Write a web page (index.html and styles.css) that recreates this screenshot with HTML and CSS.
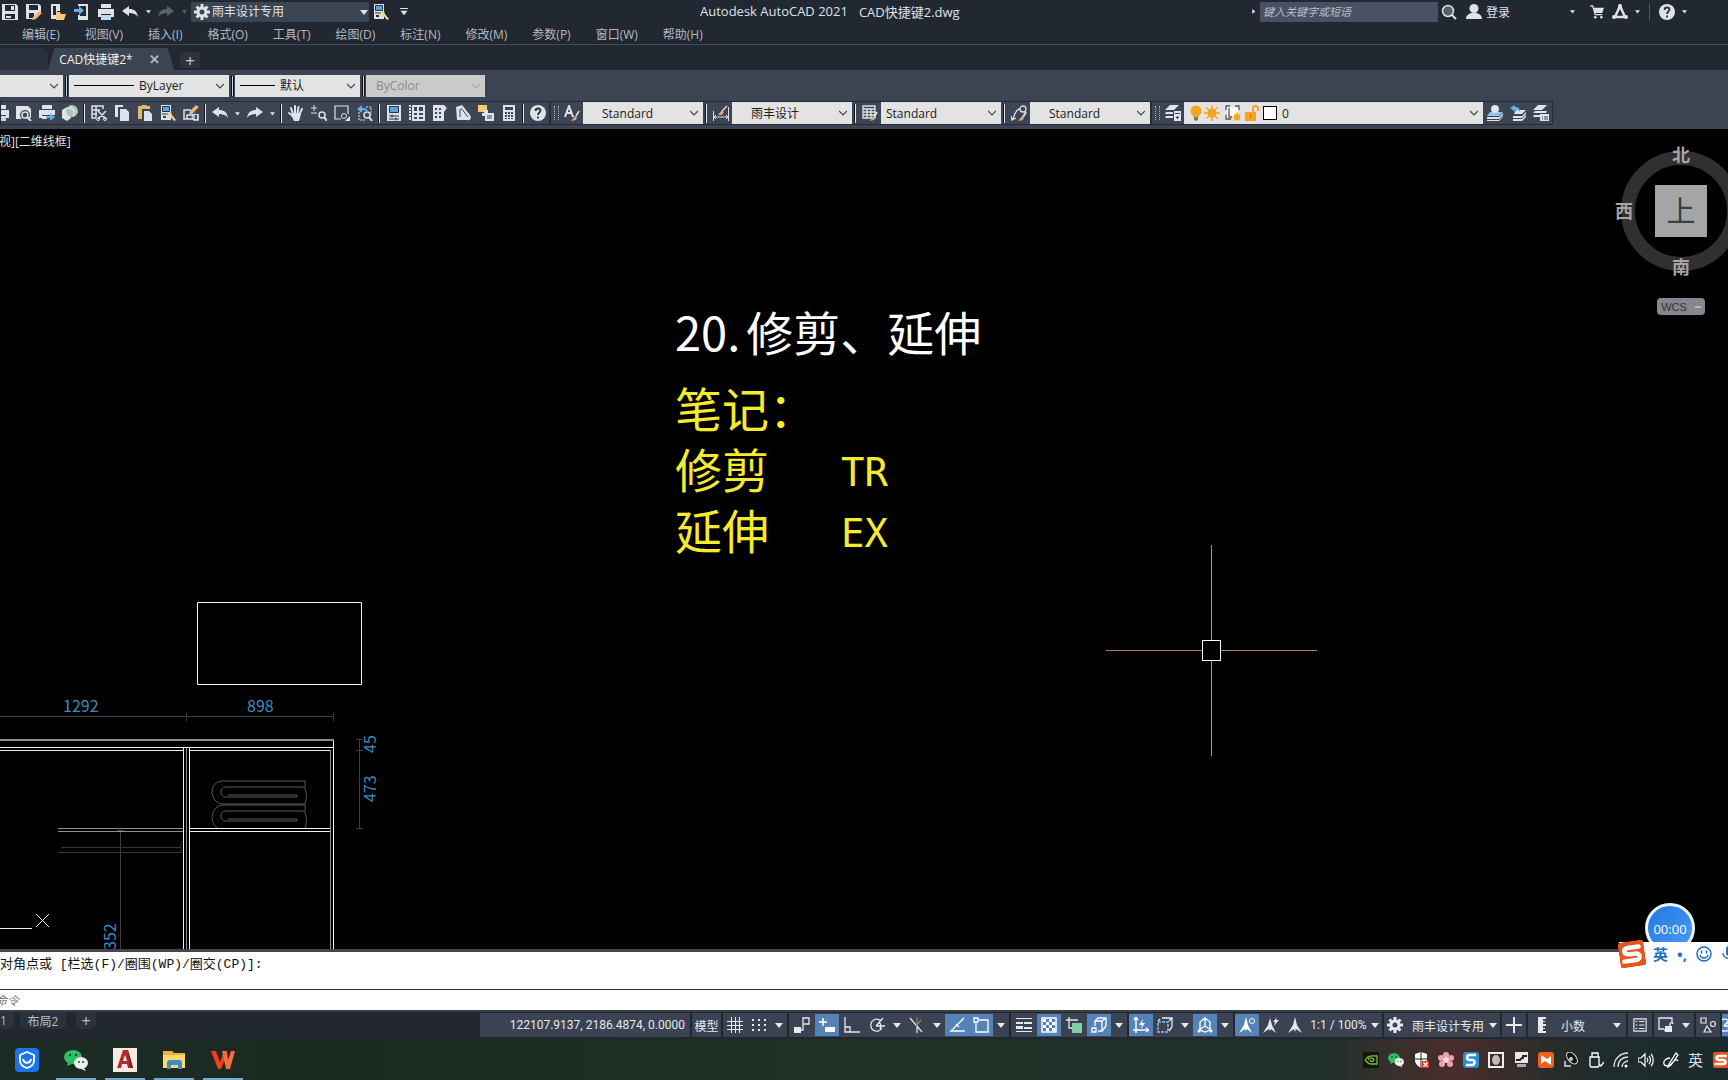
FILE: index.html
```html
<!DOCTYPE html>
<html lang="zh-CN">
<head>
  <meta charset="UTF-8">
  <title>Autodesk AutoCAD 2021 - CAD快捷键2.dwg</title>
  <link rel="stylesheet" href="styles.css">
</head>
<body>

<!-- Icon sprite -->
<svg class="sprite">
  <symbol id="save" viewBox="0 0 16 16"><path fill="currentColor" fill-rule="evenodd" d="M0 0h14l2 2v14H0zM3 1v6h10V1zM3 10v5h10v-5zM9 2h3v4H9zM4 12h5v2H4z"/></symbol>
  <symbol id="saveas" viewBox="0 0 16 16"><path fill="currentColor" fill-rule="evenodd" d="M0 0h13l2 2v6l-7 7H0zM3 1v5h9V1zM3 9v5h5V9z"/><path fill="#f0b27a" d="M7 13l6-6 3 2-6 6-4 1z"/></symbol>
  <symbol id="opendev" viewBox="0 0 16 16"><path fill="currentColor" fill-rule="evenodd" d="M1 0h9v7H7v8H1zM3 2v9h3V2z"/><path fill="#f3ca78" d="M6 8h4l1 2h5l-2 6H6z"/></symbol>
  <symbol id="savedev" viewBox="0 0 16 16"><path fill="currentColor" d="M4 0h10v16H4v-5h2v1h6V2H4z"/><path fill="#61b1ea" d="M0 5h5V2l5 4.500-5 4.500V8H0z"/></symbol>
  <symbol id="print" viewBox="0 0 16 16"><path fill="currentColor" d="M3 0h10v4H3zM0 5h16v8h-3v-3H3v3H0z"/><path fill="#b9dcf5" d="M3 11h10v5H3z"/></symbol>
  <symbol id="undo" viewBox="0 0 16 16"><path fill="currentColor" d="M0 7l7-5v3c5 0 8 2 9 8-2-3-5-4-9-4v3z"/></symbol>
  <symbol id="redo" viewBox="0 0 16 16"><path fill="currentColor" d="M16 7L9 2v3C4 5 1 7 0 13c2-3 5-4 9-4v3z"/></symbol>
  <symbol id="gear" viewBox="0 0 16 16"><path fill="none" stroke="currentColor" stroke-width="3" d="M8 0v4M8 12v4M0 8h4M12 8h4M2.500 2.500l3 3M10.500 10.500l3 3M13.500 2.500l-3 3M5.500 10.500l-3 3"/><circle cx="8" cy="8" r="4" fill="none" stroke="currentColor" stroke-width="3"/></symbol>
  <symbol id="match" viewBox="0 0 16 16"><path fill="currentColor" fill-rule="evenodd" d="M1 0h10v15H1zM3 11h3v2H3z"/><path fill="#5ba3df" stroke="#243347" d="M2.500 1.500h7v5h-7z"/><path stroke="#243347" d="M2 9h7"/><path fill="#f3d3a0" d="M8 8l3-1 1 3 4 5-2 1-4-5-3 1z"/></symbol>
  <symbol id="preview" viewBox="0 0 16 16"><path fill="currentColor" d="M0 1h12l3 3v9h-2a5 5 0 10-7 1H0z"/><circle cx="9" cy="10" r="3" fill="none" stroke="currentColor" stroke-width="1.500"/><path stroke="currentColor" stroke-width="2" d="M11 12l4 4"/></symbol>
  <symbol id="publish" viewBox="0 0 16 16"><path fill="currentColor" d="M3 0h10v4H3zM0 5h16v5H3v3H0zM3 11h5v3H3z"/><path fill="#61b1ea" d="M7 11h4V8l5 4-5 4v-3H7z"/></symbol>
  <symbol id="globe" viewBox="0 0 16 16"><path fill="currentColor" d="M0 5l5-3 4 3v8l-4 3-5-3z"/><circle cx="10" cy="6" r="6" fill="#a7c9b6"/><path fill="none" stroke="#e3efe8" d="M5 4c4-2 8 1 10 4M8 1c4 3 5 7 3 11"/></symbol>
  <symbol id="cut" viewBox="0 0 16 16"><path fill="none" stroke="currentColor" stroke-width="1.500" d="M12 4V1H1v12h4M1 5h8M1 9h5M5 1v11M7 6l8 8M15 6l-8 8"/><circle cx="7" cy="14" r="1.500" fill="none" stroke="currentColor"/><circle cx="14" cy="14" r="1.500" fill="none" stroke="currentColor"/></symbol>
  <symbol id="copy" viewBox="0 0 16 16"><path fill="currentColor" d="M1 0h8v2H4v10H1zM6 4h6l3 3v9H6z"/></symbol>
  <symbol id="paste" viewBox="0 0 16 16"><path fill="#e5b56c" d="M1 1h3l1-1h4l1 1h3v3H5v10H1z"/><path fill="currentColor" d="M7 6h5l3 3v7H7z"/></symbol>
  <symbol id="blockedit" viewBox="0 0 16 16"><path fill="none" stroke="currentColor" stroke-width="1.500" d="M8 5H1v9h9M4 14v-4h7v5h4v-6"/><circle cx="12" cy="12" r="3" fill="none" stroke="currentColor"/><path fill="#f0b27a" d="M6 9l1-3 6-6 3 2-7 7z"/></symbol>
  <symbol id="hand" viewBox="0 0 16 16"><path fill="none" stroke="currentColor" stroke-width="2" stroke-linecap="round" d="M5 9L3 3M7 8V1M9.500 8l1-6M11 10l3-6M5 11L1 8"/><path fill="currentColor" d="M4 8h8l1 1-2 7H6l-3-6z"/></symbol>
  <symbol id="zoom" viewBox="0 0 16 16"><path fill="none" stroke="currentColor" d="M3 0v6M0 3h6M0 8h6"/><circle cx="11" cy="10" r="3" fill="none" stroke="currentColor" stroke-width="1.500"/><path stroke="currentColor" stroke-width="2" d="M13 12l3 4"/></symbol>
  <symbol id="zoomwin" viewBox="0 0 16 16"><path fill="none" stroke="currentColor" stroke-width="1.200" d="M7 14H1V1h13v8"/><circle cx="10" cy="11" r="2.500" fill="none" stroke="currentColor"/><path fill="currentColor" d="M16 11v5h-5z"/></symbol>
  <symbol id="zoomprev" viewBox="0 0 16 16"><path fill="none" stroke="currentColor" stroke-dasharray="2 1" d="M2 7v8h6M9 2h5v8"/><circle cx="10" cy="10" r="3" fill="none" stroke="currentColor" stroke-width="1.500"/><path stroke="currentColor" stroke-width="2" d="M12 12l3 4"/><path fill="#61b1ea" d="M0 4l5-4v3c4 0 6 1 6 5-2-2-3-3-6-3v3z"/></symbol>
  <symbol id="props" viewBox="0 0 16 16"><path fill="currentColor" d="M1 0h14v16H1z"/><path fill="#5ba3df" stroke="#243347" d="M3.500 1.500h9v6h-9z"/><path stroke="#243347" d="M3 11h10M3 14h10M6 9.500v3M10 12.500v3"/></symbol>
  <symbol id="center" viewBox="0 0 16 16"><path fill="currentColor" fill-rule="evenodd" d="M0 0h2v2H0zM0 3h2v2H0zM0 6h2v2H0zM0 9h2v2H0zM0 12h2v3H0zM3 0h13v16H3zM5 2v4h3V2zM10 2v4h4V2zM5 8v2h3V8zM10 8v2h4V8zM5 12v2h3v-2zM10 12v2h4v-2z"/></symbol>
  <symbol id="palette" viewBox="0 0 16 16"><path fill="currentColor" fill-rule="evenodd" d="M1 0h11l3 3-3 4v9H1zM3 3v2h2V3zM7 3v2h2V3zM3 7v2h2V7zM7 7v2h2V7zM3 11v2h2v-2zM7 11v2h2v-2z"/></symbol>
  <symbol id="sheet" viewBox="0 0 16 16"><path fill="currentColor" d="M1 2l6-2 8 10c2 3 0 6-3 5H2z"/><path fill="none" stroke="#3d4454" d="M6 3l7 9M5 4v8"/></symbol>
  <symbol id="markup" viewBox="0 0 16 16"><path fill="#f3ca78" d="M0 0h9v7H0z"/><path fill="currentColor" d="M6 5h4v3h6v8H7v-5H4V8h2z"/><path stroke="#3d4454" d="M9 11h5M9 13h5"/></symbol>
  <symbol id="calc" viewBox="0 0 16 16"><path fill="currentColor" fill-rule="evenodd" d="M2 0h12v16H2zM4 2v3h8V2zM4 7v2h2V7zM7 7v2h2V7zM10 7v2h2V7zM4 10v2h2v-2zM7 10v2h2v-2zM10 10v2h2v-2zM4 13v1h2v-1zM7 13v1h2v-1zM10 13v1h2v-1z"/></symbol>
  <symbol id="help" viewBox="0 0 16 16"><circle cx="8" cy="8" r="8" fill="currentColor"/><path fill="none" stroke="#2c3442" stroke-width="1.800" d="M5.500 6c0-3.500 5-3 5-.5C10.500 7.500 8 7.500 8 10M8 11.500v2"/></symbol>
  <symbol id="textstyle" viewBox="0 0 16 16"><path fill="none" stroke="currentColor" stroke-width="2" d="M1 12L5 1l4 11M3 8h5"/><path stroke="currentColor" stroke-width="1.500" d="M15 6l-3 5"/><path fill="#d9a982" d="M11 11l2 1-1 3-5 1z"/></symbol>
  <symbol id="dimstyle" viewBox="0 0 16 16"><path fill="none" stroke="currentColor" d="M.5 6v10M15.500 2v14M1 12h14M3 10l-2 2 2 2M13 10l2 2-2 2"/><path stroke="currentColor" stroke-width="1.500" d="M14 1L9 6"/><path fill="#d9a982" d="M9 5l2 2-2 3H5z"/></symbol>
  <symbol id="tabstyle" viewBox="0 0 16 16"><path fill="none" stroke="currentColor" stroke-width="1.300" d="M1 1h12v12H1zM1 4h12M1 7h12M1 10h12M5 4v9M9 4v9"/><path stroke="currentColor" stroke-width="2" d="M15 7l-3 5"/><path fill="#d9a982" d="M11 11l2 1-1 3-4 1z"/></symbol>
  <symbol id="mlstyle" viewBox="0 0 16 16"><circle cx="12" cy="4" r="3" fill="none" stroke="currentColor" stroke-width="1.300"/><path fill="none" stroke="currentColor" stroke-width="1.300" d="M9 4C6 4 4 7 2 14M0 11l1 4 4-2"/><path stroke="currentColor" stroke-width="2" d="M15 7l-3 5"/><path fill="#d9a982" d="M11 11l2 1-1 3-5 1z"/></symbol>
  <symbol id="layerprop" viewBox="0 0 16 16"><path fill="currentColor" d="M5 0h9l-5 5H0zM1 7h7v2H0zM1 11h7v2H0zM9 6h7v10H9z"/><path stroke="#3d4454" d="M10 8.500h5M11 12.500h3M12.500 11v3"/></symbol>
  <symbol id="bulb" viewBox="0 0 16 16"><circle cx="8" cy="6" r="5.500" fill="#f5a41c"/><path fill="#f5a41c" d="M5 9h6v3H5z"/><path fill="#777" d="M6 12h4v3l-2 1-2-1z"/></symbol>
  <symbol id="sun" viewBox="0 0 16 16"><circle cx="8" cy="8" r="4.500" fill="#f5a41c"/><path stroke="#f5a41c" stroke-width="1.500" d="M8 0v16M0 8h16M2.500 2.500l11 11M13.500 2.500l-11 11"/></symbol>
  <symbol id="vpfreeze" viewBox="0 0 16 16"><path fill="#fff" d="M2 2h11v11H2z"/><path fill="none" stroke="#555" stroke-width="1.300" d="M1 5V1h4M10 1h4v4M1 10v4h5M4 3v9h3"/><circle cx="12" cy="12" r="3" fill="#f5a41c"/><path stroke="#f5a41c" d="M12 7v9M7 12h9M9 9l6 6M15 9l-6 6"/></symbol>
  <symbol id="unlock" viewBox="0 0 16 16"><path fill="#f5a41c" d="M1 7h11v9H1z"/><path fill="none" stroke="#f5a41c" stroke-width="2" d="M9 8V4c0-4 5-4 5 0v2"/><path fill="#b87400" d="M6 10h1v3H6z"/></symbol>
  <symbol id="layercur" viewBox="0 0 16 16"><path fill="#8cc4ee" d="M3 7h13l-4 4H0z"/><circle cx="8" cy="4" r="4" fill="currentColor"/><path fill="currentColor" d="M0 12h12l4-4v2l-4 4H0zM0 15h12l4-4v1l-4 4H0z"/></symbol>
  <symbol id="layerback" viewBox="0 0 16 16"><path fill="currentColor" d="M6 5h10l-4 4H4zM3 11h9l4-4v2l-4 4H3zM3 14h9l4-4v2l-4 4H3z"/><path fill="#61b1ea" d="M0 3l5-3v2c3 0 5 1 5 5-2-2-3-2-5-2v2z"/></symbol>
  <symbol id="layerstate" viewBox="0 0 16 16"><path fill="currentColor" d="M5 0h9l-5 5H0zM2 6h12l-1 2H0zM1 10h6v2H0zM7 9h9v7H7z"/><path stroke="#3d4454" d="M9 12h1M11 12h4M9 14h1M11 14h4"/></symbol>
  <symbol id="search" viewBox="0 0 16 16"><circle cx="7" cy="7" r="5.500" fill="#59606c" stroke="currentColor" stroke-width="1.500"/><path stroke="currentColor" stroke-width="2" d="M11 11l4 4"/></symbol>
  <symbol id="user" viewBox="0 0 16 16"><circle cx="8" cy="4.500" r="4.500" fill="currentColor"/><path fill="currentColor" d="M0 15c0-4 3-5 5-6h6c2 1 5 2 5 6z"/></symbol>
  <symbol id="cart" viewBox="0 0 16 16"><path fill="none" stroke="currentColor" stroke-width="1.500" d="M0 1h3l3 10h8"/><path fill="currentColor" d="M4 3h12l-2 6H6z"/><circle cx="6" cy="14" r="1.500" fill="currentColor"/><circle cx="13" cy="14" r="1.500" fill="currentColor"/></symbol>
  <symbol id="adsk" viewBox="0 0 16 16"><path fill="none" stroke="currentColor" stroke-width="2.500" d="M8 2L3 13h10z"/><circle cx="8" cy="2" r="2" fill="currentColor"/><circle cx="2" cy="13" r="2" fill="currentColor"/><circle cx="14" cy="13" r="2" fill="currentColor"/></symbol>
  <symbol id="caret" viewBox="0 0 8 8"><path fill="currentColor" d="M0 2h8L4 7z"/></symbol>
  <symbol id="chev" viewBox="0 0 8 8"><path fill="none" stroke="currentColor" stroke-width="1.200" d="M0 2l4 4 4-4"/></symbol>

  <!-- Status bar -->
  <symbol id="grid" viewBox="0 0 16 16"><path stroke="currentColor" d="M4.500 0v16M8.500 0v16M12.500 0v16M0 4.500h16M0 8.500h16M0 12.500h16"/></symbol>
  <symbol id="snap" viewBox="0 0 16 16"><path stroke="currentColor" stroke-width="2" stroke-dasharray="2 4" d="M1 3h14M1 8h14M1 13h14"/></symbol>
  <symbol id="infer" viewBox="0 0 16 16"><path fill="currentColor" d="M0 10h7v6H0z"/><path fill="none" stroke="currentColor" stroke-width="1.300" d="M7 13h2V1h6v6H9"/></symbol>
  <symbol id="dyn" viewBox="0 0 16 16"><path stroke="currentColor" stroke-width="1.500" d="M4 1v8M0 5h8"/><path fill="currentColor" d="M6 10h10v5H6z"/></symbol>
  <symbol id="ortho" viewBox="0 0 16 16"><path fill="none" stroke="currentColor" stroke-width="1.300" d="M1 0v15h15M1 10h5v5"/></symbol>
  <symbol id="polar" viewBox="0 0 16 16"><path fill="none" stroke="currentColor" stroke-width="1.300" d="M12 4a6 6 0 101 7M7 9h9M7 9l7-8M10 5c2 2 2 5 1 7"/></symbol>
  <symbol id="iso" viewBox="0 0 16 16"><path stroke="currentColor" stroke-width="1.200" d="M1 1l6 7 6 7M8 8v8"/><path stroke="#8d875f" stroke-width="1.200" d="M8 0v8M12 3l-5 6"/></symbol>
  <symbol id="track" viewBox="0 0 16 16"><path fill="none" stroke="currentColor" stroke-width="1.300" d="M15 1L2 14h14M7 7l3 3"/></symbol>
  <symbol id="osnap" viewBox="0 0 16 16"><path fill="none" stroke="currentColor" stroke-width="1.300" d="M1 1h4v4H1zM6 3h9v12H3V6"/></symbol>
  <symbol id="lweight" viewBox="0 0 16 16"><path fill="currentColor" d="M0 1h16v1H0zM0 5h7v2H0zM8 5h8v2H8zM0 9h7v3H0zM8 10h8v2H8zM0 14h16v1H0z"/></symbol>
  <symbol id="transp" viewBox="0 0 16 16"><path fill="none" stroke="currentColor" stroke-width="1.500" d="M1 1h14v14H1z"/><path stroke="currentColor" stroke-width="3" stroke-dasharray="3 3" d="M2 3.500h12M5 6.500h9M2 9.500h12M5 12.500h9"/></symbol>
  <symbol id="cycle" viewBox="0 0 16 16"><path fill="none" stroke="currentColor" stroke-width="1.300" d="M3 0v11h3M0 3h12"/><path fill="#7fd0a2" d="M6 6h10v10H6z"/></symbol>
  <symbol id="osnap3d" viewBox="0 0 16 16"><path fill="none" stroke="currentColor" stroke-width="1.300" d="M4 9V4l3-3h8v8l-4 5H7M4 4h7v9M11 4l4-3M1 11h4v4H1z"/></symbol>
  <symbol id="ucs" viewBox="0 0 16 16"><path fill="none" stroke="currentColor" stroke-width="1.400" d="M3 16V1M1 3l2-3 2 3M0 13h15M13 11l3 2-3 2"/><path fill="currentColor" d="M10 2L6 8h3l-1 4 4-6H9z"/></symbol>
  <symbol id="filter" viewBox="0 0 16 16"><path fill="none" stroke="currentColor" stroke-width="1.300" d="M5 1h10v9M3 2L1 4M15 1l-3 3M15 10l-3 4"/><path fill="none" stroke="#8cc4ee" stroke-width="1.500" stroke-dasharray="3 1" d="M1 5h10v10H1z"/></symbol>
  <symbol id="gizmo" viewBox="0 0 16 16"><path fill="none" stroke="currentColor" stroke-width="1.300" d="M8 1v8M8 9l-6 4M8 9l6 4M8 1L3 5v8l5 2 5-2V5z"/><circle cx="8" cy="2" r="1.500" fill="currentColor"/><circle cx="2" cy="14" r="1.500" fill="currentColor"/><circle cx="14" cy="14" r="1.500" fill="currentColor"/></symbol>
  <symbol id="annot" viewBox="0 0 16 16"><path fill="currentColor" d="M7 0l2 8 4 8-5-4-1 2-1-2-6 4 5-8z"/><circle cx="13" cy="4" r="2.500" fill="none" stroke="currentColor"/></symbol>
  <symbol id="annot2" viewBox="0 0 16 16"><path fill="currentColor" d="M7 1l2 7 4 8-5-4-1 2-1-2-6 4 5-8zM14 0l-4 5h2l-1 4 5-6h-3z"/></symbol>
  <symbol id="annot3" viewBox="0 0 16 16"><path fill="currentColor" d="M8 0l2 8 5 8-6-4-1 3-1-3-6 4 5-8z"/></symbol>
  <symbol id="plus" viewBox="0 0 16 16"><path stroke="currentColor" stroke-width="2" d="M8 0v16M0 8h16"/></symbol>
  <symbol id="ruler" viewBox="0 0 16 16"><path fill="currentColor" d="M5 0h8v2h-3v2h2v1h-2v2h3v2h-3v2h2v1h-2v2h3v2H5z"/></symbol>
  <symbol id="quick" viewBox="0 0 16 16"><path fill="none" stroke="currentColor" stroke-width="1.300" d="M1 1h14v14H1zM3 4h2M7 4h6M3 8h2M7 8h6M3 12h2M7 12h6"/></symbol>
  <symbol id="lockui" viewBox="0 0 16 16"><path fill="none" stroke="currentColor" stroke-width="1.300" d="M6 12H1V1h13v4M6 12l2 3M12 9V7c0-2 3-2 3 0"/><path fill="currentColor" d="M7 9h7v6H7z"/></symbol>
  <symbol id="isolate" viewBox="0 0 16 16"><path fill="none" stroke="currentColor" stroke-width="1.200" d="M1 1h5v5H1zM7 9l4 6H4z"/><circle cx="13" cy="7" r="2.500" fill="none" stroke="currentColor" stroke-width="1.200"/></symbol>

  <!-- Taskbar and tray -->
  <symbol id="guard" viewBox="0 0 24 24"><rect width="24" height="24" rx="4" fill="#1c74ea"/><path fill="none" stroke="#fff" stroke-width="1.800" d="M12 4l7 3v6c0 4-4 6-7 7-3-1-7-3-7-7V7z"/><path fill="none" stroke="#fff" stroke-width="2" d="M8 11c1 5 7 5 8 0"/></symbol>
  <symbol id="wechat" viewBox="0 0 24 24"><ellipse cx="9" cy="9" rx="9" ry="7" fill="#2dbf62"/><path fill="#2dbf62" d="M4 14l-1 4 5-2z"/><ellipse cx="17" cy="15" rx="7" ry="6" fill="#eef1ef"/><path fill="#eef1ef" d="M20 20l2 3-5-2z"/><g fill="#1b4a2d"><circle cx="6" cy="7" r="1.200"/><circle cx="12" cy="7" r="1.200"/><circle cx="15" cy="14" r="1"/><circle cx="19" cy="14" r="1"/></g></symbol>
  <symbol id="acad" viewBox="0 0 24 24"><path fill="#f7e9e6" d="M0 0h24v24H0z"/><path fill="#b32b2b" fill-rule="evenodd" d="M10 2h5l5 18h-5l-1-4H9l-1 4H4zM12 7l-2 6h4z"/><path fill="#7e1b1e" d="M15 2l5 18h-3z"/></symbol>
  <symbol id="folder" viewBox="0 0 24 24"><path fill="#e8b53c" d="M1 3h9l2 2h11v4H1z"/><path fill="#fbd970" d="M1 7h22v13H1z"/><path fill="#3f8cbf" d="M5 20v-5c0-2 1-3 3-3h9c2 0 3 1 3 3v6h-4v-4H9v4H5z"/></symbol>
  <symbol id="wps" viewBox="0 0 24 24"><path fill="#f0401f" d="M0 3h5l4 11 3-8h4l-6 15H7z"/><path fill="#ff6a3d" d="M11 3h5l1 9 3-9h4l-5 18h-4z"/></symbol>
  <symbol id="nvidia" viewBox="0 0 16 16"><path fill="#0b1a07" d="M0 0h16v16H0z"/><path fill="none" stroke="#8fb14a" stroke-width="1.300" d="M2 8c3-5 7-4 10-4h2v8H8C5 12 4 10 2 8M5 8c1-3 6-2 6 0-1 2-4 2-4 0"/></symbol>
  <symbol id="shield" viewBox="0 0 16 16"><path fill="#fff" d="M8 0l6 2v6c0 4-3 6-6 8-3-2-6-4-6-8V2z"/><path stroke="#222" d="M8 0v16M2 7h12"/><path fill="#e03a2f" d="M9 9h7v7H9z"/><path stroke="#fff" stroke-width="1.300" d="M10.500 10.500l4 4M14.500 10.500l-4 4"/></symbol>
  <symbol id="flower" viewBox="0 0 16 16"><g fill="#eda3ab"><circle cx="8" cy="3" r="3"/><circle cx="13" cy="6" r="3"/><circle cx="12" cy="12" r="3"/><circle cx="4" cy="12" r="3"/><circle cx="3" cy="6" r="3"/></g><circle cx="8" cy="8" r="3" fill="#f9d9da"/></symbol>
  <symbol id="sblue" viewBox="0 0 16 16"><rect width="16" height="16" rx="3" fill="#2a8fd0"/><path fill="none" stroke="#fff" stroke-width="2.500" d="M13 3H7c-4 0-4 5 0 5h2c4 0 3 5 0 5H3"/></symbol>
  <symbol id="disc" viewBox="0 0 16 16"><path fill="none" stroke="#eee" stroke-width="2" d="M1 1h14v14H1z"/><ellipse cx="8" cy="8" rx="4" ry="5" fill="#bbb"/></symbol>
  <symbol id="chart" viewBox="0 0 16 16"><path fill="#e8e8e8" d="M2 0h13v11H2z"/><path fill="none" stroke="#222" stroke-width="1.800" d="M3 8h4l4-4h3M10 3v4"/><path fill="#aaa" d="M4 12h9v3H4z"/></symbol>
  <symbol id="todesk" viewBox="0 0 16 16"><rect width="16" height="16" rx="3" fill="#f2601d"/><path fill="#fff" d="M3 3l6 4 4-3v9L7 9l-4 3z"/></symbol>
  <symbol id="audio" viewBox="0 0 16 16"><ellipse cx="9" cy="6" rx="7" ry="4" transform="rotate(50 9 6)" fill="#111" stroke="#ddd"/><circle cx="8" cy="7" r="2" fill="#ccc"/><path fill="none" stroke="#ddd" stroke-width="1.500" d="M2 9v5h6"/></symbol>
  <symbol id="usb" viewBox="0 0 16 16"><path fill="none" stroke="#fff" stroke-width="1.300" d="M4 5V1h6v4M2 5h9v9l-1 1H3l-1-1zM11 12l2 2 3-4"/></symbol>
  <symbol id="wifi" viewBox="0 0 16 16"><path fill="none" stroke="#ddd" stroke-width="1.300" d="M1 15C1 7 7 1 15 1M5 15c0-6 4-10 10-10M9 15c0-3 3-6 6-6"/><circle cx="13" cy="14" r="1.500" fill="#fff"/></symbol>
  <symbol id="volume" viewBox="0 0 16 16"><path fill="none" stroke="#fff" stroke-width="1.200" d="M0 6h3l4-4v12l-4-4H0zM9 6c1 1 1 3 0 4M11 4c2 2 2 6 0 8M13 2c3 3 3 9 0 12"/></symbol>
  <symbol id="pen" viewBox="0 0 16 16"><path fill="none" stroke="#fff" stroke-width="1.300" d="M6 12l7-11 2 2-7 10-3 2zM7 6C3 6 0 9 1 12s6 2 8-1 5-4 6-2"/></symbol>
  <symbol id="sogou" viewBox="0 0 24 24"><rect width="24" height="24" rx="3" fill="#e85420"/><path fill="none" stroke="#fff" stroke-width="4" stroke-linecap="round" d="M19 6H9c-5 0-5 5 0 6h6c5 0 5 6 0 6H4"/></symbol>
  <symbol id="smile" viewBox="0 0 16 16"><circle cx="8" cy="8" r="7" fill="none" stroke="currentColor" stroke-width="1.500"/><path stroke="currentColor" stroke-width="1.500" d="M5.500 4.500v3M10.500 4.500v3"/><path fill="none" stroke="currentColor" stroke-width="1.300" d="M4 9c1 4 7 4 8 0"/></symbol>
  <symbol id="mic" viewBox="0 0 16 16"><rect x="5" width="6" height="10" rx="3" fill="currentColor"/><path fill="none" stroke="currentColor" stroke-width="1.500" d="M2 7c0 7 12 7 12 0M8 12v4"/></symbol>
</svg>

<header class="titlebar">
  <div class="quick">
    <button class="tb" aria-label="保存"><svg class="ic"><use href="#save"/></svg></button>
    <button class="tb" aria-label="另存为"><svg class="ic"><use href="#saveas"/></svg></button>
    <button class="tb" aria-label="从移动端打开"><svg class="ic"><use href="#opendev"/></svg></button>
    <button class="tb" aria-label="保存到移动端"><svg class="ic"><use href="#savedev"/></svg></button>
    <button class="tb" aria-label="打印"><svg class="ic"><use href="#print"/></svg></button>
    <button class="tb" aria-label="放弃"><svg class="ic"><use href="#undo"/></svg></button>
    <button class="drop" aria-label="放弃列表"><svg class="car"><use href="#caret"/></svg></button>
    <button class="tb off" aria-label="重做"><svg class="ic"><use href="#redo"/></svg></button>
    <button class="drop off" aria-label="重做列表"><svg class="car"><use href="#caret"/></svg></button>
  </div>
  <label class="workspace">
    <svg class="ic"><use href="#gear"/></svg>
    <select aria-label="工作空间"><option>雨丰设计专用</option></select>
    <svg class="car big"><use href="#caret"/></svg>
  </label>
  <button class="tb" aria-label="特性匹配"><svg class="ic"><use href="#match"/></svg></button>
  <button class="tb custom" aria-label="自定义"><svg class="car big"><use href="#caret"/></svg></button>
  <h1 class="title"><span>Autodesk AutoCAD 2021</span><span>CAD快捷键2.dwg</span></h1>
  <div class="account">
    <button class="drop side" aria-label="展开"><svg class="car"><use href="#caret"/></svg></button>
    <input class="search" type="text" placeholder="键入关键字或短语" aria-label="搜索">
    <button class="tb" aria-label="搜索"><svg class="ic"><use href="#search"/></svg></button>
    <button class="login"><svg class="ic"><use href="#user"/></svg>登录</button>
    <button class="drop" aria-label="登录选项"><svg class="car"><use href="#caret"/></svg></button>
    <button class="tb cart" aria-label="应用商店"><svg class="ic sm"><use href="#cart"/></svg></button>
    <button class="tb" aria-label="Autodesk"><svg class="ic"><use href="#adsk"/></svg></button>
    <button class="drop" aria-label="更多"><svg class="car"><use href="#caret"/></svg></button>
    <span class="vline"></span>
    <button class="tb" aria-label="帮助"><svg class="ic"><use href="#help"/></svg></button>
    <button class="drop" aria-label="帮助列表"><svg class="car"><use href="#caret"/></svg></button>
  </div>
</header>

<nav class="menubar">
  <a href="#">编辑(E)</a>
  <a href="#">视图(V)</a>
  <a href="#">插入(I)</a>
  <a href="#">格式(O)</a>
  <a href="#">工具(T)</a>
  <a href="#">绘图(D)</a>
  <a href="#">标注(N)</a>
  <a href="#">修改(M)</a>
  <a href="#">参数(P)</a>
  <a href="#">窗口(W)</a>
  <a href="#">帮助(H)</a>
</nav>

<div class="doctabs">
  <span class="doctab prev"></span>
  <button class="doctab active">CAD快捷键2*<b>✕</b></button>
  <button class="newtab" aria-label="新建图形">+</button>
</div>

<div class="toolrow props">
  <label class="combo color"><select aria-label="颜色"><option></option></select><svg class="chev"><use href="#chev"/></svg></label>
  <span class="grip"></span>
  <label class="combo ltype"><i></i><select aria-label="线型"><option>ByLayer</option></select><svg class="chev"><use href="#chev"/></svg></label>
  <span class="grip"></span>
  <label class="combo lweight"><i></i><select aria-label="线宽"><option>默认</option></select><svg class="chev"><use href="#chev"/></svg></label>
  <span class="grip"></span>
  <label class="combo pstyle"><select aria-label="打印样式" disabled><option>ByColor</option></select><svg class="chev"><use href="#chev"/></svg></label>
</div>

<div class="toolrow std">
  <div class="panel first">
    <button class="tb" aria-label="打印"><svg class="ic"><use href="#print"/></svg></button>
    <button class="tb" aria-label="打印预览"><svg class="ic"><use href="#preview"/></svg></button>
    <button class="tb" aria-label="发布"><svg class="ic"><use href="#publish"/></svg></button>
    <button class="tb" aria-label="三维打印"><svg class="ic"><use href="#globe"/></svg></button>
    <span class="sep"></span>
    <button class="tb" aria-label="剪切"><svg class="ic"><use href="#cut"/></svg></button>
    <button class="tb" aria-label="复制"><svg class="ic"><use href="#copy"/></svg></button>
    <button class="tb" aria-label="粘贴"><svg class="ic"><use href="#paste"/></svg></button>
    <button class="tb" aria-label="特性匹配"><svg class="ic"><use href="#match"/></svg></button>
    <button class="tb" aria-label="块编辑器"><svg class="ic"><use href="#blockedit"/></svg></button>
    <span class="sep"></span>
    <button class="tb" aria-label="放弃"><svg class="ic"><use href="#undo"/></svg></button>
    <button class="drop" aria-label="放弃列表"><svg class="car"><use href="#caret"/></svg></button>
    <button class="tb" aria-label="重做"><svg class="ic"><use href="#redo"/></svg></button>
    <button class="drop" aria-label="重做列表"><svg class="car"><use href="#caret"/></svg></button>
    <span class="sep"></span>
    <button class="tb" aria-label="平移"><svg class="ic"><use href="#hand"/></svg></button>
    <button class="tb" aria-label="实时缩放"><svg class="ic"><use href="#zoom"/></svg></button>
    <button class="tb" aria-label="窗口缩放"><svg class="ic"><use href="#zoomwin"/></svg></button>
    <button class="tb" aria-label="缩放上一个"><svg class="ic"><use href="#zoomprev"/></svg></button>
    <span class="sep"></span>
    <button class="tb" aria-label="特性"><svg class="ic"><use href="#props"/></svg></button>
    <button class="tb" aria-label="设计中心"><svg class="ic"><use href="#center"/></svg></button>
    <button class="tb" aria-label="工具选项板"><svg class="ic"><use href="#palette"/></svg></button>
    <button class="tb" aria-label="图纸集"><svg class="ic"><use href="#sheet"/></svg></button>
    <button class="tb" aria-label="标记集"><svg class="ic"><use href="#markup"/></svg></button>
    <button class="tb" aria-label="快速计算器"><svg class="ic"><use href="#calc"/></svg></button>
    <span class="sep"></span>
    <button class="tb" aria-label="帮助"><svg class="ic"><use href="#help"/></svg></button>
  </div>
  <div class="panel">
    <span class="dots"></span>
    <button class="tb" aria-label="文字样式"><svg class="ic"><use href="#textstyle"/></svg></button>
    <label class="combo style"><select aria-label="文字样式"><option>Standard</option></select><svg class="chev"><use href="#chev"/></svg></label>
    <span class="sep"></span>
    <button class="tb" aria-label="标注样式"><svg class="ic"><use href="#dimstyle"/></svg></button>
    <label class="combo style"><select aria-label="标注样式"><option>雨丰设计</option></select><svg class="chev"><use href="#chev"/></svg></label>
    <span class="sep"></span>
    <button class="tb" aria-label="表格样式"><svg class="ic"><use href="#tabstyle"/></svg></button>
    <label class="combo style near"><select aria-label="表格样式"><option>Standard</option></select><svg class="chev"><use href="#chev"/></svg></label>
    <span class="sep"></span>
    <button class="tb" aria-label="多重引线样式"><svg class="ic"><use href="#mlstyle"/></svg></button>
    <label class="combo style"><select aria-label="多重引线样式"><option>Standard</option></select><svg class="chev"><use href="#chev"/></svg></label>
  </div>
  <div class="panel">
    <span class="dots"></span>
    <button class="tb" aria-label="图层特性"><svg class="ic"><use href="#layerprop"/></svg></button>
    <label class="combo layer">
      <svg class="ic"><use href="#bulb"/></svg>
      <svg class="ic"><use href="#sun"/></svg>
      <svg class="ic gap"><use href="#vpfreeze"/></svg>
      <svg class="ic"><use href="#unlock"/></svg>
      <span class="swatch"></span>
      <select aria-label="图层"><option>0</option></select>
      <svg class="chev"><use href="#chev"/></svg>
    </label>
    <button class="tb" aria-label="置为当前"><svg class="ic"><use href="#layercur"/></svg></button>
    <button class="tb" aria-label="上一个图层"><svg class="ic"><use href="#layerback"/></svg></button>
    <button class="tb" aria-label="图层状态"><svg class="ic"><use href="#layerstate"/></svg></button>
  </div>
</div>

<main class="canvas">
  <svg class="drawing">
    <g class="white">
      <path d="M197.500 473.500h164v82h-164z"/>
      <path d="M0 618.500h334M0 621.500h183M190 621.500h141"/>
      <path d="M183.500 619v210M189.500 619v210M333.500 610v220"/>
      <path d="M190 699.500h141M190 702.500h141"/>
      <path d="M0 799.500h32M36 785l13 13M49 785l-13 13"/>
    </g>
    <g class="grey">
      <path d="M0 611h334" stroke-width="2"/>
      <path d="M186.500 619v210M330.500 621v210"/>
      <path d="M58 699.500h125M58 702.500h125"/>
    </g>
    <g class="dim">
      <path d="M0 587.500h334M186.500 584v8M333.500 584v8"/>
      <path d="M120.500 703v130M117 701.500h7"/>
      <path d="M359.500 610v89M356 610.500h7M356 621.500h7M356 699.500h7"/>
    </g>
    <g class="cloth">
      <path d="M305 658V652H223c-15 0-14 22 0 23h82c2-6 2-12-1-17h-78c-7 0-7 10 0 10h71v-2h-69"/>
      <path d="M305 682V676H223c-12 1-14 17-6 23M305 699c2-6 2-12-1-17h-78c-7 0-7 10 0 10h71v-2h-69"/>
    </g>
    <path class="rail" d="M61 718.500h120M58 723.500h124M183 712c-3 3-3 8 0 11"/>
    <path class="cross-y" d="M1211.500 416v211"/>
    <path class="cross-x" d="M1106 521.500h211"/>
    <rect class="pick" x="1202.500" y="511.500" width="18" height="20"/>
    <g class="dimtext">
      <text x="63" y="583">1292</text>
      <text x="247" y="583">898</text>
      <text transform="translate(376 624) rotate(-90)">45</text>
      <text transform="translate(376 673) rotate(-90)">473</text>
      <text transform="translate(116 821) rotate(-90)">352</text>
    </g>
  </svg>

  <div class="viewlabel">视][二维线框]</div>

  <div class="notes">
    <h2>20.<span>修剪、延伸</span></h2>
    <p>笔记：</p>
    <p>修剪<kbd>TR</kbd></p>
    <p>延伸<kbd>EX</kbd></p>
  </div>

  <div class="viewcube">
    <div class="ring">
      <span class="n">北</span>
      <span class="w">西</span>
      <button class="top">上</button>
      <span class="s">南</span>
    </div>
    <button class="wcs">WCS<i></i></button>
  </div>

  <div class="timer">00:00</div>
</main>

<section class="command">
  <p>对角点或 [栏选(F)/圈围(WP)/圈交(CP)]:</p>
  <input type="text" placeholder="命令" aria-label="命令">
  <div class="ime">
    <svg class="sogou"><use href="#sogou"/></svg>
    <b>英</b>
    <b class="punct">•,</b>
    <svg class="ic"><use href="#smile"/></svg>
    <svg class="ic"><use href="#mic"/></svg>
  </div>
</section>

<footer class="statusbar">
  <div class="layouts">
    <button class="l1">1</button>
    <button class="l2">布局2</button>
    <button class="l3" aria-label="新建布局">+</button>
  </div>
  <div class="status">
    <output class="coords">122107.9137, 2186.4874, 0.0000</output>
    <div class="sg"><button class="model">模型</button></div>
    <div class="sg">
      <button class="st" aria-label="栅格"><svg class="ic"><use href="#grid"/></svg></button>
      <button class="st" aria-label="捕捉模式"><svg class="ic"><use href="#snap"/></svg></button>
      <button class="sd" aria-label="捕捉设置"><svg class="car big"><use href="#caret"/></svg></button>
    </div>
    <div class="sg">
      <button class="st wide" aria-label="推断约束"><svg class="ic"><use href="#infer"/></svg></button>
      <button class="st on" aria-label="动态输入"><svg class="ic"><use href="#dyn"/></svg></button>
      <button class="st wide" aria-label="正交模式"><svg class="ic"><use href="#ortho"/></svg></button>
      <button class="st" aria-label="极轴追踪"><svg class="ic"><use href="#polar"/></svg></button>
      <button class="sd" aria-label="极轴设置"><svg class="car big"><use href="#caret"/></svg></button>
      <button class="st" aria-label="等轴测草图"><svg class="ic"><use href="#iso"/></svg></button>
      <button class="sd" aria-label="等轴测平面"><svg class="car big"><use href="#caret"/></svg></button>
      <button class="st on" aria-label="对象捕捉追踪"><svg class="ic"><use href="#track"/></svg></button>
      <button class="st on" aria-label="对象捕捉"><svg class="ic"><use href="#osnap"/></svg></button>
      <button class="sd" aria-label="对象捕捉设置"><svg class="car big"><use href="#caret"/></svg></button>
    </div>
    <div class="sg">
      <button class="st wide" aria-label="线宽"><svg class="ic"><use href="#lweight"/></svg></button>
      <button class="st on" aria-label="透明度"><svg class="ic"><use href="#transp"/></svg></button>
      <button class="st wide" aria-label="选择循环"><svg class="ic"><use href="#cycle"/></svg></button>
      <button class="st on" aria-label="三维对象捕捉"><svg class="ic"><use href="#osnap3d"/></svg></button>
      <button class="sd" aria-label="三维捕捉设置"><svg class="car big"><use href="#caret"/></svg></button>
    </div>
    <div class="sg">
      <button class="st on" aria-label="动态 UCS"><svg class="ic"><use href="#ucs"/></svg></button>
      <button class="st" aria-label="选择过滤"><svg class="ic"><use href="#filter"/></svg></button>
      <button class="sd" aria-label="过滤设置"><svg class="car big"><use href="#caret"/></svg></button>
      <button class="st on" aria-label="小控件"><svg class="ic"><use href="#gizmo"/></svg></button>
      <button class="sd" aria-label="小控件设置"><svg class="car big"><use href="#caret"/></svg></button>
    </div>
    <div class="sg">
      <button class="st on" aria-label="注释可见性"><svg class="ic"><use href="#annot"/></svg></button>
      <button class="st" aria-label="自动缩放"><svg class="ic"><use href="#annot2"/></svg></button>
      <button class="st" aria-label="注释比例"><svg class="ic"><use href="#annot3"/></svg></button>
      <button class="scale">1:1 / 100%<svg class="car big"><use href="#caret"/></svg></button>
    </div>
    <div class="sg"><button class="ws"><svg class="ic"><use href="#gear"/></svg><span>雨丰设计专用</span><svg class="car big"><use href="#caret"/></svg></button></div>
    <div class="sg"><button class="st" aria-label="注释监视器"><svg class="ic"><use href="#plus"/></svg></button></div>
    <div class="sg"><button class="units"><svg class="ic"><use href="#ruler"/></svg><span>小数</span><svg class="car big"><use href="#caret"/></svg></button></div>
    <div class="sg"><button class="st" aria-label="快捷特性"><svg class="ic sm"><use href="#quick"/></svg></button></div>
    <div class="sg">
      <button class="st" aria-label="锁定用户界面"><svg class="ic"><use href="#lockui"/></svg></button>
      <button class="sd" aria-label="锁定设置"><svg class="car big"><use href="#caret"/></svg></button>
    </div>
    <div class="sg"><button class="st" aria-label="隔离对象"><svg class="ic"><use href="#isolate"/></svg></button></div>
    <div class="sg"><button class="st on cutoff" aria-label="图形性能"><svg class="ic"><use href="#polar"/></svg></button></div>
  </div>
</footer>

<div class="taskbar">
  <div class="apps">
    <button aria-label="安全卫士"><svg><use href="#guard"/></svg></button>
    <button class="run" aria-label="微信"><svg><use href="#wechat"/></svg></button>
    <button class="run" aria-label="AutoCAD"><svg><use href="#acad"/></svg></button>
    <button class="run" aria-label="文件资源管理器"><svg><use href="#folder"/></svg></button>
    <button class="run" aria-label="WPS"><svg><use href="#wps"/></svg></button>
  </div>
  <div class="tray">
    <svg class="ic"><use href="#nvidia"/></svg>
    <svg class="ic"><use href="#wechat"/></svg>
    <svg class="ic"><use href="#shield"/></svg>
    <svg class="ic"><use href="#flower"/></svg>
    <svg class="ic"><use href="#sblue"/></svg>
    <svg class="ic"><use href="#disc"/></svg>
    <svg class="ic"><use href="#chart"/></svg>
    <svg class="ic"><use href="#todesk"/></svg>
    <svg class="ic"><use href="#audio"/></svg>
    <svg class="ic"><use href="#usb"/></svg>
    <svg class="ic"><use href="#wifi"/></svg>
    <svg class="ic"><use href="#volume"/></svg>
    <svg class="ic"><use href="#pen"/></svg>
    <span class="lang">英</span>
    <svg class="ic"><use href="#sogou"/></svg>
  </div>
</div>

</body>
</html>
```
FILE: styles.css
```css
* {
  box-sizing: border-box;
}

body {
  margin: 0;
  height: 100vh;
  overflow: hidden;
  display: flex;
  flex-direction: column;
  background: #212832;
  color: #dfe2e7;
  font: 12px "Open Sans", "Noto Sans CJK SC", sans-serif;
}

button, input, select {
  font: inherit;
  color: inherit;
  background: none;
  border: 0;
  padding: 0;
  margin: 0;
}

button {
  display: flex;
  align-items: center;
  justify-content: center;
  flex: none;
}

select {
  appearance: none;
  flex: 1;
  min-width: 0;
}

select:disabled {
  color: #8a8a8a;
  opacity: 1;
}

svg { flex: none; }

.sprite { display: none; }
.ic { width: 16px; height: 16px; }
.ic.sm { width: 14px; height: 14px; }
.car { width: 5px; height: 5px; }
.car.big { width: 8px; height: 8px; }
.chev { width: 8px; height: 8px; color: #444; }

.tb { width: 23px; height: 22px; }
.drop { width: 12px; height: 22px; }
.off { color: #5b626e; }

/* Title bar */
.titlebar {
  height: 23px;
  display: flex;
  align-items: center;
}

.quick {
  width: 191px;
  display: flex;
  overflow: hidden;
}

.quick .tb { width: 24px; }
.quick .tb:first-child { margin-left: -2px; }

.workspace {
  width: 178px;
  height: 20px;
  padding: 0 1px 0 3px;
  display: flex;
  align-items: center;
  gap: 2px;
  background: #3b4453;
}

.custom .car {
  border-top: 1px solid #dfe2e7;
}

.title {
  flex: 1;
  margin: 0;
  padding-left: 285px;
  display: flex;
  gap: 11px;
  font-size: 13px;
  font-weight: normal;
  white-space: nowrap;
}

.account {
  margin-right: 38px;
  display: flex;
  align-items: center;
}

.side svg { transform: rotate(-90deg); }

.search {
  width: 178px;
  height: 20px;
  padding: 0 3px;
  background: #485163;
  font-size: 11px;
  font-style: italic;
}

.search::placeholder { color: #b9bfca; }

.login {
  gap: 4px;
  padding: 0 56px 0 5px;
}

.account .cart { margin-left: 7px; }

.vline {
  width: 1px;
  height: 18px;
  margin: 0 5px 0 6px;
  background: #4b5360;
}

/* Menu */
.menubar {
  height: 22px;
  padding-left: 22px;
  display: flex;
  align-items: center;
  gap: 25px;
  border-bottom: 1px solid #454c58;
}

.menubar a {
  color: #b4b9c1;
  text-decoration: none;
  white-space: nowrap;
}

/* Drawing tabs */
.doctabs {
  height: 25px;
  display: flex;
  align-items: flex-end;
}

.doctab {
  height: 22px;
  background: #3c4454;
}

.prev {
  width: 48px;
  background: #2a313d;
  border-radius: 0 6px 0 0;
}

.active {
  width: 126px;
  gap: 16px;
  padding-right: 3px;
  color: #eef0f3;
  clip-path: polygon(5% 0, 95% 0, 100% 100%, 0 100%);
}

.active b {
  color: #b4b9c2;
  font-size: 13px;
}

.newtab {
  width: 20px;
  height: 16px;
  margin: 0 0 2px 6px;
  background: #2d343f;
  color: #c4c8cf;
  font-size: 17px;
  border-radius: 4px;
}

/* Toolbars */
.toolrow {
  display: flex;
  align-items: center;
  background: #3c4454;
}

.props { height: 31px; }

.combo {
  height: 22px;
  padding-right: 5px;
  display: flex;
  align-items: center;
  flex: none;
  background: #e3e3e3;
  color: #1c1c1c;
}

.combo i {
  height: 1px;
  background: #000;
}

.color { width: 63px; }
.ltype { width: 160px; padding-left: 5px; }
.ltype i { width: 60px; margin-right: 5px; }
.lweight { width: 125px; padding-left: 5px; }
.lweight i { width: 35px; margin-right: 5px; }
.pstyle { width: 119px; padding-left: 10px; background: #cbcbcb; }
.pstyle .chev { color: #aaa; }

.grip {
  width: 3px;
  height: 20px;
  margin: 0 1px 0 2px;
  border: solid #0e1116;
  border-width: 0 1px;
  background: #cfd2d8;
}

.std {
  height: 28px;
  align-items: flex-start;
}

.panel {
  height: 24px;
  display: flex;
  align-items: center;
  border: 1px solid #252c37;
  background: #3d4454;
}

.first {
  width: 550px;
  justify-content: flex-end;
  overflow: hidden;
}

.sep {
  width: 2px;
  height: 19px;
  margin: 0 2px;
  flex: none;
  border-left: 1px solid #11151b;
  background: #e4e6ea;
}

.dots {
  width: 5px;
  height: 14px;
  margin: 0 1px 0 3px;
  flex: none;
  border: dotted #aab0bb;
  border-width: 0 1px;
}

.style { width: 120px; padding-left: 19px; }
.near { padding-left: 5px; }

.layer {
  width: 299px;
  padding-left: 4px;
}

.layer .gap { margin-left: 5px; }
.layer .gap + .ic { margin-left: 3px; }

.swatch {
  width: 14px;
  height: 14px;
  margin: 0 5px 0 3px;
  border: 1px solid #000;
  background: #fff;
}

/* Model space */
.canvas {
  flex: 1;
  min-height: 0;
  position: relative;
  overflow: hidden;
  background: #000;
}

.drawing {
  position: absolute;
  inset: 0;
  width: 100%;
  height: 100%;
  fill: none;
}

.white { stroke: #f2f2f2; }
.grey { stroke: #8e8e8e; }
.dim { stroke: #3f3f3f; }
.cloth { stroke: #5a5a5a; }
.rail { stroke: #1d3f31; }
.cross-y { stroke: #8faa80; }
.cross-x { stroke: #b0805f; }
.pick { stroke: #fff; fill: #000; }
.dimtext { fill: #3a8dc0; font: 16px "Noto Sans CJK SC", sans-serif; }

.viewlabel {
  padding-top: 4px;
  margin-left: -1px;
  line-height: 18px;
}

.notes {
  position: absolute;
  left: 675px;
  top: 171px;
  color: #f6ea2d;
}

.notes h2, .notes p {
  margin: 0;
  font: 47px "Noto Sans CJK SC", sans-serif;
  line-height: 61px;
}

.notes h2 {
  margin-bottom: 15px;
  color: #fff;
}

.notes h2 span { margin-left: 6px; }

.notes kbd {
  margin-left: 72px;
  font: 39px "DejaVu Sans Mono", monospace;
  line-height: 1;
  vertical-align: 2px;
}

.viewcube {
  position: absolute;
  right: -13px;
  top: 22px;
  width: 120px;
  display: flex;
  flex-direction: column;
  align-items: center;
}

.ring {
  width: 120px;
  height: 120px;
  display: grid;
  place-items: center;
  position: relative;
  border: 14px solid #303030;
  border-radius: 50%;
  font-size: 18px;
  font-weight: bold;
  line-height: 20px;
  color: #a5a5a5;
}

.ring span { position: absolute; }
.n { top: -20px; }
.s { bottom: -20px; }
.w { left: -20px; }

.top {
  width: 52px;
  height: 52px;
  padding-bottom: 4px;
  background: #a4a5a7;
  color: #3a3d42;
  font: 29px "Noto Sans CJK SC", sans-serif;
}

.wcs {
  width: 48px;
  height: 17px;
  margin-top: 27px;
  gap: 8px;
  border-radius: 4px;
  background: #85868e;
  color: #303238;
  font: 11px "Liberation Sans", sans-serif;
}

.wcs i {
  width: 6px;
  height: 2px;
  background: #b5b6bd;
}

.timer {
  position: absolute;
  right: 33px;
  bottom: -4px;
  width: 50px;
  height: 50px;
  border: 3px solid #eaf3fd;
  border-radius: 50%;
  background: linear-gradient(135deg, #2377e0, #4a9cf5);
  color: #fff;
  font-size: 13px;
  line-height: 46px;
  text-align: center;
}

/* Command line */
.command {
  position: relative;
  border-top: 3px solid #43464b;
  border-bottom: 2px solid #3a3d42;
  background: #fff;
  color: #111;
}

.command p {
  height: 38px;
  margin: 0;
  padding-top: 3px;
  border-bottom: 1px solid #2b2e33;
  font: 13px "Liberation Mono", "Noto Sans CJK SC", monospace;
  line-height: 20px;
}

.command input {
  display: block;
  width: 100%;
  height: 20px;
  text-indent: -5px;
  font-style: italic;
}

.command input::placeholder { color: #777; }

.ime {
  position: absolute;
  right: 0;
  top: -10px;
  width: 109px;
  height: 23px;
  display: flex;
  align-items: center;
  gap: 9px;
  background: #fff;
  color: #1d6fbd;
  font-size: 15px;
}

.sogou {
  width: 26px;
  height: 26px;
  margin-right: -1px;
  transform: rotate(-8deg);
}

/* Status bar */
.statusbar {
  height: 27px;
  display: flex;
  justify-content: space-between;
  overflow: hidden;
  background: #212832;
}

.layouts {
  display: flex;
  color: #b9bec6;
}

.layouts button {
  height: 17px;
  background: #2b323e;
  border-radius: 0 0 5px 5px;
}

.layouts .l1 { width: 14px; justify-content: flex-start; }
.layouts .l2 { width: 46px; margin-left: 6px; }
.layouts .l3 { width: 20px; margin-left: 10px; font-size: 16px; }

.status {
  margin-top: 1px;
  height: 24px;
  display: flex;
  gap: 2px;
  font-family: Roboto, "Noto Sans CJK SC", sans-serif;
  color: #e6e9ee;
  white-space: nowrap;
}

.coords {
  width: 210px;
  padding-right: 5px;
  background: #3b4252;
  line-height: 24px;
  text-align: right;
}

.sg {
  display: flex;
  align-items: center;
  background: #3b4252;
}

.st { width: 24px; height: 22px; }
.wide { width: 26px; }
.sd { width: 16px; height: 22px; }
.on { background: #5583b8; color: #fff; }
.model { width: 29px; }
.scale { width: 75px; gap: 4px; }
.ws { width: 116px; gap: 5px; }
.ws span { margin-left: 4px; }
.units { width: 98px; padding: 0 5px; gap: 12px; }
.units span { flex: 1; text-align: left; }
.cutoff { width: 6px; overflow: hidden; }

/* Windows taskbar */
.taskbar {
  height: 41px;
  display: flex;
  justify-content: space-between;
  overflow: hidden;
  background: linear-gradient(90deg, #1d2b26, #1b2a20 20%, #203125 50%, #1d302b 76%, #4a2d2b 84%, #1f2c2b 92%, #1b2a2b);
}

.apps {
  display: flex;
  gap: 9px;
  padding-left: 7px;
}

.apps button {
  width: 40px;
  height: 41px;
  border: solid transparent;
  border-width: 2px 0;
}

.apps .run { border-bottom-color: #76a9d0; }
.apps svg { width: 24px; height: 24px; }

.tray {
  display: flex;
  align-items: center;
  gap: 9px;
  margin-right: -1px;
}

.lang {
  width: 16px;
  font-size: 15px;
  line-height: 20px;
}
```
